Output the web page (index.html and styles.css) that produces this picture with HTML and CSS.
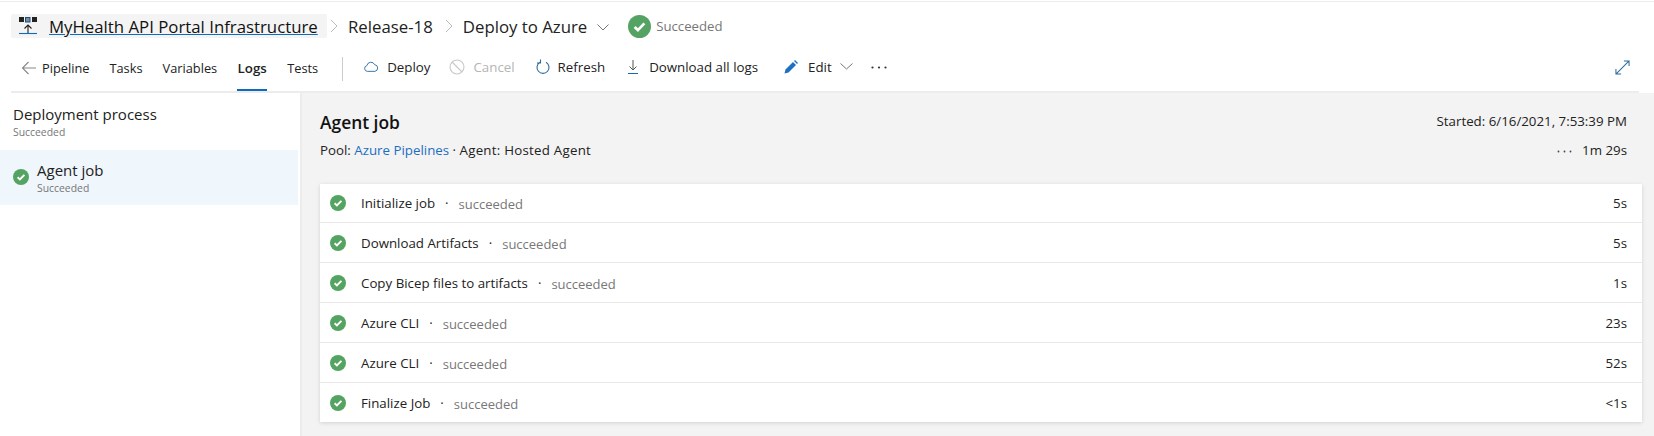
FILE: index.html
```html
<!DOCTYPE html>
<html lang="en">

<head>
    <meta charset="UTF-8">
    <title>Deploy to Azure - Logs</title>
    <link rel="stylesheet" href="styles.css">
</head>

<body>
    <svg class="defs" width="0" height="0">
        <symbol id="ok" viewBox="0 0 16 16">
            <circle cx="8" cy="8" r="8" fill="#55a362"></circle>
            <path d="M4.600 8.300l2.300 2.200 4.500-4.700" fill="none" stroke="#fff" stroke-width="1.900"></path>
        </symbol>
    </svg>

    <header>
        <div class="crumbs">
            <a class="crumb-home" href="#">
                <svg class="pipe-icon" width="18" height="18" viewBox="0 0 18 18">
                    <rect x="0" y="0" width="5" height="5" fill="#222"></rect>
                    <rect x="6.500" y="0.500" width="4.500" height="4.500" fill="#6d90b5" stroke="#2a4a6a"></rect>
                    <rect x="13" y="0" width="5" height="5" fill="#222"></rect>
                    <path d="M0 16.500h18" stroke="#0f6cbd" stroke-width="1.100"></path>
                    <path d="M9 16V8M5.500 11.500L9 8l3.500 3.500" fill="none" stroke="#222" stroke-width="1.100"></path>
                </svg>
                <span>MyHealth API Portal Infrastructure</span>
            </a>
            <svg class="sep" width="8" height="14" viewBox="0 0 8 14"><path d="M1 1l6 6-6 6" fill="none" stroke="#bbb"></path></svg>
            <span class="crumb">Release-18</span>
            <svg class="sep" width="8" height="14" viewBox="0 0 8 14"><path d="M1 1l6 6-6 6" fill="none" stroke="#bbb"></path></svg>
            <span class="crumb">Deploy to Azure</span>
            <svg class="chev" width="12" height="7" viewBox="0 0 12 7"><path d="M0.500 0.500L6 6l5.500-5.500" fill="none" stroke="#777"></path></svg>
            <svg class="status-big" width="23" height="23"><use href="#ok"></use></svg>
            <span class="status-text">Succeeded</span>
        </div>

        <nav class="toolbar">
            <a class="tab tab-back" href="#">
                <svg width="15" height="14" viewBox="0 0 15 14"><path d="M15 7H1.500M7.500 1L1.500 7l6 6" fill="none" stroke="#888" stroke-width="1.100"></path></svg>
                Pipeline
            </a>
            <a class="tab" href="#">Tasks</a>
            <a class="tab" href="#">Variables</a>
            <a class="tab active" href="#">Logs</a>
            <a class="tab" href="#">Tests</a>
            <span class="divider"></span>
            <a class="cmd" href="#">
                <svg width="16" height="11" viewBox="0 0 17 12"><path d="M4.500 11.300a3.200 3.200 0 0 1-.5-6.300 4.500 4.500 0 0 1 8.500-1 3.700 3.700 0 0 1 .3 7.300z" fill="none" stroke="#2b6a9e"></path></svg>
                Deploy
            </a>
            <a class="cmd disabled" href="#">
                <svg width="16" height="16" viewBox="0 0 16 16"><circle cx="8" cy="8" r="7" fill="none" stroke="#c8c8c8" stroke-width="1.100"></circle><path d="M3 3l10 10" stroke="#c8c8c8" stroke-width="1.100"></path></svg>
                Cancel
            </a>
            <a class="cmd cmd-refresh" href="#">
                <svg width="14" height="16" viewBox="0 0 14 16"><path d="M4 3.200a6 6 0 1 0 6 0M4.500 0.500v3.500H1" fill="none" stroke="#2b6a9e" stroke-width="1.100"></path></svg>
                Refresh
            </a>
            <a class="cmd cmd-download" href="#">
                <svg width="10" height="14" viewBox="0 0 10 14"><path d="M5 0v10M1.500 6.500L5 10l3.500-3.500" fill="none" stroke="#555"></path><path d="M0 13.500h10" stroke="#0f6cbd"></path></svg>
                Download all logs
            </a>
            <a class="cmd cmd-edit" href="#">
                <svg width="14" height="14" viewBox="0 0 14 14"><path d="M0.500 13.500l1-4 7.500-7.500 3 3-7.500 7.500z" fill="#1f6fc0"></path><path d="M10 1l1-1 3 3-1 1z" fill="#1f6fc0"></path></svg>
                Edit
                <svg class="chev-sm" width="13" height="7" viewBox="0 0 13 7"><path d="M0.500 0.500L6.500 6l6-5.500" fill="none" stroke="#777"></path></svg>
            </a>
            <svg class="more" width="16" height="3" viewBox="0 0 16 3"><circle cx="1.500" cy="1.500" r="1.100" fill="#333"></circle><circle cx="8" cy="1.500" r="1.100" fill="#333"></circle><circle cx="14.500" cy="1.500" r="1.100" fill="#333"></circle></svg>
            <a class="expand" href="#">
                <svg width="15" height="15" viewBox="0 0 16 16"><path d="M1 15L15 1M9.500 1H15v5.500M1 9.500V15h5.500" fill="none" stroke="#2b6a9e" stroke-width="1.100"></path></svg>
            </a>
        </nav>
    </header>

    <main>
        <aside class="side">
            <div class="side-head">
                <div class="side-title">Deployment process</div>
                <div class="side-sub">Succeeded</div>
            </div>
            <div class="side-item">
                <svg width="16" height="16"><use href="#ok"></use></svg>
                <div>
                    <div class="side-title">Agent job</div>
                    <div class="side-sub">Succeeded</div>
                </div>
            </div>
        </aside>

        <section class="detail">
            <div class="job-head">
                <div>
                    <h1>Agent job</h1>
                    <p class="pool">Pool: <a href="#">Azure Pipelines</a> · <span class="agent">Agent: Hosted Agent</span></p>
                </div>
                <div class="job-meta">
                    <p class="started">Started: 6/16/2021, 7:53:39 PM</p>
                    <p class="total">
                        <svg class="dots" width="15" height="3" viewBox="0 0 15 3"><circle cx="1.500" cy="1.500" r="0.900" fill="#444"></circle><circle cx="7.500" cy="1.500" r="0.900" fill="#444"></circle><circle cx="13.500" cy="1.500" r="0.900" fill="#444"></circle></svg>
                        1m 29s
                    </p>
                </div>
            </div>

            <ul class="steps">
                <li><svg width="16" height="16"><use href="#ok"></use></svg><span class="name">Initialize job</span><span class="dot">·</span><span class="state">succeeded</span><span class="time">5s</span></li>
                <li><svg width="16" height="16"><use href="#ok"></use></svg><span class="name">Download Artifacts</span><span class="dot">·</span><span class="state">succeeded</span><span class="time">5s</span></li>
                <li><svg width="16" height="16"><use href="#ok"></use></svg><span class="name">Copy Bicep files to artifacts</span><span class="dot">·</span><span class="state">succeeded</span><span class="time">1s</span></li>
                <li><svg width="16" height="16"><use href="#ok"></use></svg><span class="name">Azure CLI</span><span class="dot">·</span><span class="state">succeeded</span><span class="time">23s</span></li>
                <li><svg width="16" height="16"><use href="#ok"></use></svg><span class="name">Azure CLI</span><span class="dot">·</span><span class="state">succeeded</span><span class="time">52s</span></li>
                <li><svg width="16" height="16"><use href="#ok"></use></svg><span class="name">Finalize Job</span><span class="dot">·</span><span class="state">succeeded</span><span class="time">&lt;1s</span></li>
            </ul>
        </section>
    </main>
</body>

</html>
```

FILE: styles.css
```css
/* Reset */
* {
    margin: 0;
    padding: 0;
    box-sizing: border-box;
}

body {
    font-family: 'Open Sans', sans-serif;
    font-size: 13.3px;
    color: #222;
    background: #fff;
    height: 435px;
    margin-top: 1px;
    overflow: hidden;
    border-top: 1px solid #ececec;
}

a {
    color: inherit;
    text-decoration: none;
}

.defs {
    position: absolute;
}

/* Header */
header {
    height: 91px;
    padding-top: 12px;
    margin: 0 15px 0 11px;
    border-bottom: 2px solid #ececec;
}

.crumbs {
    display: flex;
    align-items: center;
    height: 24px;
    font-size: 16.8px;
}

.crumb-home {
    display: flex;
    align-items: center;
    gap: 12px;
    height: 24px;
    width: 316px;
    padding-left: 8px;
    background: #f4f4f4;
    border-radius: 2px;
}

.crumb-home span {
    color: #111;
    text-decoration: underline;
    text-decoration-color: #0f6cbd;
}

.crumb {
    margin-right: 9px;
}

.sep {
    margin: 0 10px 0 3px;
}

.chev {
    margin: 2px 0 0 1px;
}

.status-big {
    margin-left: 19px;
}

.status-text {
    margin-left: 5px;
    font-size: 13.2px;
    color: #777;
}

.toolbar {
    display: flex;
    align-items: center;
    height: 45px;
    margin-top: 8px;
}

.tab {
    display: flex;
    align-items: center;
    height: 45px;
    margin-right: 20px;
    padding-bottom: 2px;
    gap: 6px;
    font-size: 12.8px;
}

.tab-back {
    margin-left: 10px;
}

.active {
    justify-content: center;
    width: 30px;
    font-size: 13.3px;
    font-weight: 600;
    box-shadow: inset 0 -2px 0 #0f6cbd;
}

.divider {
    width: 1px;
    height: 24px;
    background: #ccc;
    margin: 0 20px 0 4px;
}

.cmd {
    display: flex;
    align-items: center;
    height: 45px;
    padding-bottom: 4px;
    gap: 8px;
    margin-right: 19px;
}

.disabled {
    color: #b5b5b5;
    margin-right: 21px;
}

.cmd-refresh {
    margin-right: 23px;
}

.cmd-download {
    gap: 11px;
    margin-right: 26px;
}

.cmd-edit {
    gap: 10px;
    margin-right: 18px;
}

.chev-sm {
    margin-left: -2px;
}

.more {
    margin-top: -2px;
}

.expand {
    display: flex;
    margin-left: auto;
    margin-right: 9px;
    margin-top: -2px;
}

/* Main area */
main {
    display: flex;
    height: 343px;
}

.side {
    width: 302px;
    border-right: 2px solid #ececec;
    padding-top: 11px;
    flex: none;
}

.side-head {
    padding-left: 13px;
    height: 46px;
}

.side-title {
    font-size: 15px;
    line-height: 20px;
}

.side-sub {
    font-size: 10.400px;
    line-height: 12px;
    margin-top: 2px;
    color: #777;
}

.side-item {
    display: flex;
    align-items: center;
    gap: 8px;
    width: 298px;
    height: 55px;
    padding: 0 0 2px 13px;
    background: #eff6fc;
}

.detail {
    flex: 1;
    background: #f3f3f3;
    padding: 17px 12px 0 18px;
}

.job-head {
    display: flex;
    justify-content: space-between;
    height: 74px;
}

h1 {
    font-size: 17.400px;
    font-weight: 600;
    line-height: 24px;
    color: #111;
}

.pool {
    margin-top: 7px;
    line-height: 18px;
}

.pool a {
    color: #1b6ec2;
}

.agent {
    letter-spacing: 0.25px;
}

.job-meta {
    text-align: right;
    padding: 2px 15px 0 0;
    line-height: 18px;
}

.total {
    margin-top: 11px;
}

.dots {
    margin-right: 7px;
    vertical-align: middle;
}

.steps {
    list-style: none;
    background: #fff;
    box-shadow: 0 1px 4px rgba(0, 0, 0, 0.14);
}

.steps li {
    display: flex;
    align-items: center;
    height: 40px;
    padding: 0 15px 0 10px;
    border-bottom: 1px solid #e8e8e8;
}

.steps li:first-child {
    height: 39px;
}

.steps li:last-child {
    height: 39px;
    border-bottom: none;
}

.name {
    margin-left: 15px;
}

.dot {
    margin: 0 10px;
}

.state {
    color: #777;
    font-size: 13px;
    margin-top: 2px;
}

.time {
    margin-left: auto;
}
```
